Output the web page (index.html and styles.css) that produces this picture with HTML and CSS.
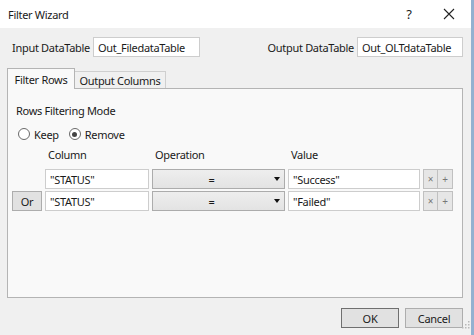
FILE: index.html
```html
<!DOCTYPE html>
<html lang="en">
<head>
    <meta charset="UTF-8">
    <title>Filter Wizard</title>
    <link rel="stylesheet" href="styles.css">
</head>
<body>
<div class="window">
    <div class="titlebar">
        <span class="title">Filter Wizard</span>
        <span class="help">?</span>
        <span class="close">
            <svg width="12" height="12" viewBox="0 0 12 12"><path d="M1 1L11 11M11 1L1 11" stroke="#222" stroke-width="1.1" fill="none"/></svg>
        </span>
    </div>
    <div class="main">
        <div class="tables">
            <label class="lbl">Input DataTable</label>
            <div class="field in-table">Out_FiledataTable</div>
            <span class="spacer"></span>
            <label class="lbl">Output DataTable</label>
            <div class="field out-table">Out_OLTdataTable</div>
        </div>

        <div class="tabs">
            <div class="tab active">Filter Rows</div>
            <div class="tab cols">Output Columns</div>
        </div>
        <div class="panel">
            <div class="mode-title">Rows Filtering Mode</div>
            <div class="radios">
                <span class="radio"></span><span class="radio-lbl">Keep</span>
                <span class="radio checked"></span><span class="radio-lbl">Remove</span>
            </div>
            <div class="grid">
                <span></span>
                <span class="head">Column</span>
                <span class="head">Operation</span>
                <span class="head">Value</span>
                <span></span>

                <span></span>
                <div class="field">"STATUS"</div>
                <div class="combo"><span class="op">=</span><span class="arrow"></span></div>
                <div class="field">"Success"</div>
                <div class="mini"><span class="mbtn">&times;</span><span class="mbtn">+</span></div>

                <button class="btn or">Or</button>
                <div class="field">"STATUS"</div>
                <div class="combo"><span class="op">=</span><span class="arrow"></span></div>
                <div class="field">"Failed"</div>
                <div class="mini"><span class="mbtn">&times;</span><span class="mbtn">+</span></div>
            </div>
        </div>
        <div class="footer">
            <button class="btn ok">OK</button>
            <button class="btn cancel">Cancel</button>
        </div>
    </div>
    <svg class="grip" width="8" height="12" viewBox="0 0 8 12">
        <rect x="6" y="2" width="1.5" height="1.5" fill="#b8b8b8"/>
        <rect x="6" y="5" width="1.5" height="1.5" fill="#b8b8b8"/>
        <rect x="3" y="5" width="1.5" height="1.5" fill="#b8b8b8"/>
        <rect x="6" y="8" width="1.5" height="1.5" fill="#b8b8b8"/>
        <rect x="3" y="8" width="1.5" height="1.5" fill="#b8b8b8"/>
        <rect x="0" y="8" width="1.5" height="1.5" fill="#b8b8b8"/>
    </svg>
</div>
</body>
</html>
```

FILE: styles.css
```css
body { margin: 0; font-family: "Noto Sans", "Open Sans", sans-serif; font-size: 11px; letter-spacing: -0.3px; color: #1a1a1a; }
.window { position: relative; width: 474px; height: 335px; box-sizing: border-box; background: #f0f0f0; border-right: 3px solid #93b1d0; display: flex; flex-direction: column; }

.titlebar { height: 28px; background: #fff; display: flex; align-items: center; font-size: 11px; }
.title { padding-left: 8px; flex: 1; }
.help { width: 20px; text-align: center; margin-right: 20px; font-size: 13px; }
.close { width: 20px; display: flex; justify-content: center; margin-right: 12px; }

.main { padding: 9px 8px 0 7px; }
.tables { display: flex; align-items: center; height: 20px; padding-left: 5px; }
.lbl { margin-right: 3px; }
.spacer { flex: 1; }
.field { background: #fff; border: 1px solid #cdcdcd; height: 20px; box-sizing: border-box; padding-left: 4px; display: flex; align-items: center; white-space: nowrap; }
.in-table { width: 107px; }
.out-table { width: 106px; }

.tabs { display: flex; align-items: flex-end; margin-top: 11px; height: 20px; position: relative; z-index: 1; }
.tab { border: 1px solid #cfcfcf; border-bottom: none; height: 17px; box-sizing: border-box; display: flex; align-items: center; justify-content: center; background: #f0f0f0; }
.tab.active { width: 68px; height: 21px; margin-bottom: -1px; background: #f9f9f9; border-color: #b4b4b4; }
.tab.cols { width: 91px; border-left: none; }

.panel { background: #f9f9f9; border: 1px solid #b4b4b4; height: 210px; box-sizing: border-box; padding: 14px 8px 0 4px; }
.mode-title { padding-left: 4px; line-height: 16px; }
.radios { display: flex; align-items: center; height: 16px; margin-top: 7px; padding-left: 6px; }
.radio { width: 12px; height: 12px; border: 1px solid #6a6a6a; border-radius: 50%; box-sizing: border-box; background: #fff; position: relative; }
.radio.checked::after { content: ""; position: absolute; left: 2.5px; top: 2.5px; width: 5px; height: 5px; border-radius: 50%; background: #444; }
.radio-lbl { margin-left: 4px; margin-right: 10px; }

.grid { display: grid; grid-template-columns: 30px 104px 133px 132px 30px; grid-template-rows: 20px 20px 20px; column-gap: 3px; row-gap: 2px; margin-top: 5px; }
.grid > .head { padding-left: 3px; line-height: 16px; }
.combo { height: 20px; box-sizing: border-box; border: 1px solid #acacac; background: linear-gradient(#eeeeee, #e3e3e3); display: flex; align-items: center; }
.op { flex: 1; text-align: center; }
.arrow { width: 0; height: 0; border-left: 3.5px solid transparent; border-right: 3.5px solid transparent; border-top: 4px solid #111; margin-right: 4px; margin-left: 4px; }
.mini { display: flex; height: 20px; }
.mbtn { width: 15px; height: 20px; box-sizing: border-box; border: 1px solid #c0c0c0; background: #e6e6e6; color: #777; font-size: 10px; display: flex; align-items: center; justify-content: center; }
.mbtn + .mbtn { border-left: none; }

.btn { font-family: inherit; font-size: 11px; letter-spacing: -0.3px; color: #1a1a1a; background: #e1e1e1; border: 1px solid #adadad; padding: 0; height: 20px; box-sizing: border-box; }
.or { width: 30px; }
.footer { display: flex; justify-content: flex-end; gap: 6px; margin-top: 10px; }
.ok, .cancel { width: 58px; }
.ok { border-color: #6f6f6f; }
.grip { position: absolute; right: 1px; bottom: 4px; }
```
